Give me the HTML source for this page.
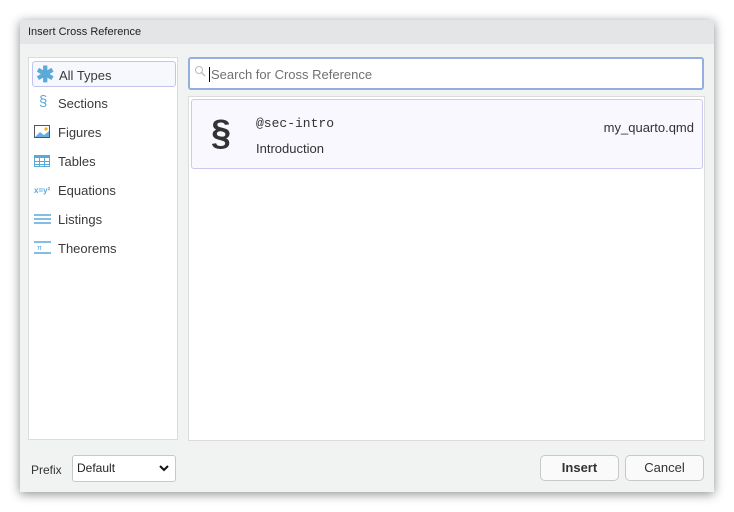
<!DOCTYPE html><html><head><style>
body{margin:0;width:734px;height:512px;background:#fff;position:relative;font-family:"Liberation Sans",sans-serif;overflow:hidden}
.dlg{position:absolute;left:20px;top:20px;width:694px;height:472px;background:#f1f2f2;box-shadow:0 2px 10px rgba(0,0,0,.45)}
.title{position:absolute;left:0;top:0;width:694px;height:24px;background:#e3e5e6;font-size:11px;line-height:24px;padding-left:8px;box-sizing:border-box;color:#222}
.abs{position:absolute}
.left{left:8px;top:37px;width:150px;height:383px;background:#fff;border:1px solid #dcdcdc;box-sizing:border-box}
.item{position:absolute;left:3px;width:144px;height:26px;font-size:13px;color:#3a3a3a;line-height:27px;box-sizing:border-box}
.item .t{position:absolute;left:26px}
.sel{border:1px solid #c3c3f0;background:#f7f7fe;border-radius:3px}
.search{left:168px;top:37px;width:516px;height:33px;background:#fff;border:2px solid #94aee0;border-radius:3px;box-sizing:border-box}
.list{left:168px;top:76px;width:517px;height:345px;background:#fff;border:1px solid #dcdcdc;box-sizing:border-box}
.card{left:2px;top:2px;width:512px;height:70px;background:#f8f8fe;border:1px solid #c9c9f1;border-radius:3px;box-sizing:border-box}
.btn{top:435px;height:26px;background:#fafafa;border:1px solid #c8c8c8;border-radius:5px;box-sizing:border-box;font-size:13px;text-align:center;line-height:24px;color:#333}
</style></head><body>
<div class="dlg">
<div class="title">Insert Cross Reference</div>
<div class="abs left">
 <div class="item sel" style="top:3px"><span class="abs" style="left:3px;top:0;color:#5aa9d8;font-size:22px;line-height:26px;font-weight:bold">✱</span><span class="t">All Types</span></div>
 <div class="item" style="top:32px"><span class="abs" style="left:7px;color:#5aa9d8;font-size:15px;line-height:24px">§</span><span class="t">Sections</span></div>
 <div class="item" style="top:61px"><svg class="abs" style="left:2px;top:6px" width="16" height="13"><rect x=".5" y=".5" width="15" height="12" fill="#fff" stroke="#555"/><path d="M1 12 L6 7 L10 10 L15 6 V12Z" fill="#6aaee0"/><circle cx="12" cy="4" r="1.6" fill="#f0b020"/></svg><span class="t">Figures</span></div>
 <div class="item" style="top:90px"><svg class="abs" style="left:2px;top:7px" width="16" height="12"><rect x=".5" y=".5" width="15" height="11" fill="#fff" stroke="#5aa9d8"/><rect x="0" y="0" width="16" height="3" fill="#5aa9d8"/><path d="M0 6.5H16M0 9.5H16M5.5 0V12M10.5 0V12" stroke="#5aa9d8"/></svg><span class="t">Tables</span></div>
 <div class="item" style="top:119px"><span class="abs" style="left:2px;top:0;font-size:8px;color:#5aa9d8;font-weight:bold">x=y²</span><span class="t">Equations</span></div>
 <div class="item" style="top:148px"><svg class="abs" style="left:2px;top:8px" width="17" height="10"><path d="M0 1H17M0 5H17M0 9H17" stroke="#5aa9d8" stroke-width="1.6"/></svg><span class="t">Listings</span></div>
 <div class="item" style="top:177px"><svg class="abs" style="left:2px;top:6px" width="17" height="13"><path d="M0 1H17M0 12H17" stroke="#5aa9d8" stroke-width="1.6"/><text x="3" y="9" font-size="7" fill="#5aa9d8">π</text></svg><span class="t">Theorems</span></div>
</div>
<div class="abs search"><svg class="abs" style="left:4px;top:6px" width="12" height="12"><circle cx="5" cy="5" r="3.5" fill="none" stroke="#bbb"/><path d="M7.5 7.5 L11 11" stroke="#bbb" stroke-width="1.4"/></svg><span class="abs" style="left:19px;top:8px;font-size:13px;color:#707070;border-left:1px solid #000;padding-left:1px;line-height:15px">Search for Cross Reference</span></div>
<div class="abs list"><div class="abs card">
 <span class="abs" style="left:19px;top:11px;font-size:36px;color:#333;line-height:44px;font-weight:bold">§</span>
 <span class="abs" style="left:64px;top:16px;font-family:'Liberation Mono',monospace;font-size:13px;color:#333">@sec-intro</span>
 <span class="abs" style="left:64px;top:41px;font-size:13px;color:#333">Introduction</span>
 <span class="abs" style="right:8px;top:20px;font-size:13px;color:#333">my_quarto.qmd</span>
</div></div>
<span class="abs" style="left:11px;top:443px;font-size:12px;color:#333">Prefix</span>
<div class="abs" style="left:52px;top:435px;width:104px;height:27px;background:#fff;border:1px solid #c8c8c8;border-radius:3px;box-sizing:border-box;font-size:12px;line-height:25px;padding-left:4px;color:#222">Default<svg class="abs" style="right:6px;top:9px" width="10" height="7"><path d="M1 1L5 5L9 1" stroke="#111" stroke-width="2" fill="none"/></svg></div>
<div class="abs btn" style="left:520px;width:79px;font-weight:bold">Insert</div>
<div class="abs btn" style="left:605px;width:79px">Cancel</div>
</div>
</body></html>
